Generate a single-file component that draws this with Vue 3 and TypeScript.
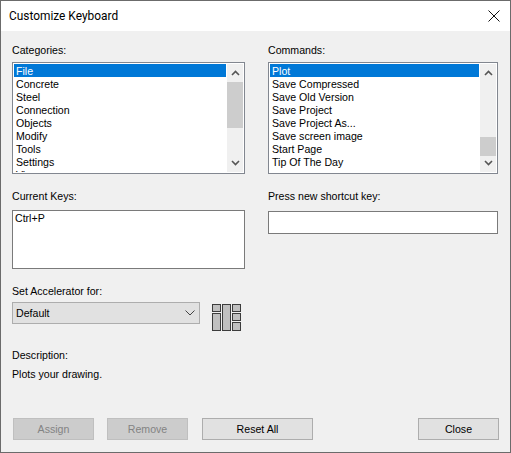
<script setup lang="ts">
const categories = ['File', 'Concrete', 'Steel', 'Connection', 'Objects', 'Modify', 'Tools', 'Settings', 'View']
const commands = ['Plot', 'Save Compressed', 'Save Old Version', 'Save Project', 'Save Project As...', 'Save screen image', 'Start Page', 'Tip Of The Day']
</script>

<template>
  <div class="dialog">
    <header class="titlebar">
      <span class="title">Customize Keyboard</span>
      <svg class="close" width="12" height="12" viewBox="0 0 12 12"><path d="M.5.5l11 11M11.5.5l-11 11" stroke="#111" stroke-width="1" fill="none" /></svg>
    </header>
    <main class="body">
      <section class="lists">
        <div class="col">
          <div class="label">Categories:</div>
          <div class="listbox">
            <ul class="items">
              <li v-for="(c, i) in categories" :key="c" :class="{ sel: i === 0 }">{{ c }}</li>
            </ul>
            <div class="scroll">
              <svg class="arrow" width="9" height="6" viewBox="0 0 9 6"><path d="M1 5l3.5-3.5L8 5" stroke="#555" stroke-width="1.6" fill="none" /></svg>
              <div class="track"><div class="thumb cat-thumb"></div></div>
              <svg class="arrow" width="9" height="6" viewBox="0 0 9 6"><path d="M1 1l3.5 3.5L8 1" stroke="#555" stroke-width="1.6" fill="none" /></svg>
            </div>
          </div>
        </div>
        <div class="col right">
          <div class="label">Commands:</div>
          <div class="listbox">
            <ul class="items">
              <li v-for="(c, i) in commands" :key="c" :class="{ sel: i === 0 }">{{ c }}</li>
            </ul>
            <div class="scroll">
              <svg class="arrow" width="9" height="6" viewBox="0 0 9 6"><path d="M1 5l3.5-3.5L8 5" stroke="#555" stroke-width="1.6" fill="none" /></svg>
              <div class="track"><div class="thumb cmd-thumb"></div></div>
              <svg class="arrow" width="9" height="6" viewBox="0 0 9 6"><path d="M1 1l3.5 3.5L8 1" stroke="#555" stroke-width="1.6" fill="none" /></svg>
            </div>
          </div>
        </div>
      </section>

      <section class="keys">
        <div class="col">
          <div class="label">Current Keys:</div>
          <div class="keybox">Ctrl+P</div>
        </div>
        <div class="col right">
          <div class="label">Press new shortcut key:</div>
          <div class="input"></div>
        </div>
      </section>

      <section class="accel">
        <div class="label">Set Accelerator for:</div>
        <div class="accel-row">
          <div class="select">
            <span>Default</span>
            <svg width="10" height="6" viewBox="0 0 10 6"><path d="M.5.5L5 5 9.500.5" stroke="#444" stroke-width="1" fill="none" /></svg>
          </div>
          <svg class="layout-icon" width="30" height="27" viewBox="0 0 30 27">
            <g fill="#c0c0c0" stroke="#3c3c3c" stroke-width="1">
              <rect x=".5" y=".5" width="8" height="7" />
              <rect x=".5" y="9.500" width="8" height="17" />
              <rect x="10.500" y=".5" width="8" height="26" />
              <rect x="20.500" y=".5" width="8" height="7" />
              <rect x="20.500" y="9.500" width="8" height="7" />
              <rect x="20.500" y="18.500" width="8" height="8" />
            </g>
          </svg>
        </div>
      </section>

      <section class="desc">
        <div class="label">Description:</div>
        <div class="desc-text">Plots your drawing.</div>
      </section>

      <footer class="buttons">
        <button class="btn small" disabled>Assign</button>
        <button class="btn small second" disabled>Remove</button>
        <button class="btn wide">Reset All</button>
        <button class="btn small last">Close</button>
      </footer>
    </main>
  </div>
</template>

<style>
html, body { margin: 0; padding: 0; background: #f0f0f0; }
</style>

<style scoped>
.dialog {
  width: 511px;
  height: 453px;
  box-sizing: border-box;
  border: 1px solid #6b6b6b;
  display: flex;
  flex-direction: column;
  background: #f0f0f0;
  color: #000;
  font-family: "Liberation Sans", Arial, sans-serif;
  font-size: 10.6px;
  line-height: 15px;
  overflow: hidden;
}
.titlebar {
  height: 30px;
  flex: none;
  background: #fff;
  display: flex;
  align-items: center;
  justify-content: space-between;
  padding: 0 10px 0 8px;
}
.title { font-family: Roboto, sans-serif; font-size: 11.9px; }
.close { display: block; margin-top: -1px; }
.body {
  flex: 1;
  display: flex;
  flex-direction: column;
  padding: 0 0 12px 11px;
  min-height: 0;
}
.lists, .keys { display: flex; }
.col { width: 233px; flex: none; }
.col.right { width: 230px; margin-left: 23px; }
.lists { padding-top: 12px; }
.label { height: 13px; }
.listbox {
  margin-top: 6px;
  height: 112px;
  box-sizing: border-box;
  border: 1px solid #828790;
  background: #fff;
  padding: 1px;
  display: flex;
  overflow: hidden;
}
.items {
  list-style: none;
  margin: 0;
  padding: 0;
  flex: 1;
  min-width: 0;
  overflow: hidden;
}
.items li { height: 13px; padding-left: 2px; white-space: nowrap; }
.items li.sel { background: #0078d7; color: #fff; }
.scroll {
  width: 16px;
  flex: none;
  margin-left: 1px;
  background: #f0f0f0;
  display: flex;
  flex-direction: column;
  align-items: center;
}
.arrow { flex: none; margin: 6px 0; display: block; }
.track { flex: 1; width: 100%; position: relative; }
.thumb { position: absolute; left: 0; right: 0; background: #cdcdcd; }
.cat-thumb { top: 0; height: 46px; }
.cmd-thumb { top: 55px; height: 19px; }
.keys { padding-top: 15px; }
.keybox {
  margin-top: 8px;
  height: 59px;
  box-sizing: border-box;
  border: 1px solid #7a7a7a;
  background: #fff;
  padding: 0 2px;
}
.input {
  margin-top: 9px;
  height: 23px;
  box-sizing: border-box;
  border: 1px solid #7a7a7a;
  background: #fff;
}
.accel { padding-top: 15px; }
.accel-row { display: flex; align-items: flex-start; margin-top: 5px; }
.select {
  width: 188px;
  height: 22px;
  box-sizing: border-box;
  border: 1px solid #adadad;
  background: #e1e1e1;
  display: flex;
  align-items: center;
  justify-content: space-between;
  padding: 0 4px 0 3px;
}
.layout-icon { margin-left: 12px; margin-top: 2px; display: block; }
.desc { padding-top: 17px; }
.desc-text { margin-top: 6px; }
.buttons { margin-top: auto; display: flex; }
.btn {
  flex: none;
  height: 22px;
  box-sizing: border-box;
  border: 1px solid #adadad;
  background: #e1e1e1;
  padding: 1px 0 0;
  font: inherit;
  color: #000;
  text-align: center;
}
.btn:disabled { background: #ccc; border-color: #bfbfbf; color: #838383; }
.small { width: 81px; margin-left: 1px; }
.second { margin-left: 13px; }
.wide { width: 111px; margin-left: 14px; }
.last { margin-left: 105px; }
</style>
